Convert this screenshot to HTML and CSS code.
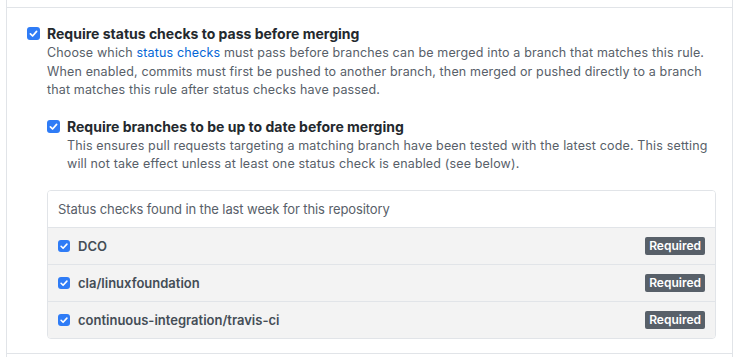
FILE: index.html
```html
<!DOCTYPE html>
<html lang="en">
<head>
<meta charset="utf-8">
<title>Status checks</title>
<link rel="stylesheet" href="styles.css">
</head>
<body>
<div class="panel">
  <div class="item">
    <div class="opt">
      <span class="cb"><svg viewBox="0 0 13 13" width="13" height="13"><path d="M3.4 6.8 L5.6 9 L9.6 4.4" fill="none" stroke="#fff" stroke-width="1.7" stroke-linecap="round" stroke-linejoin="round"/></svg></span>
      <div class="opt-body">
        <div class="opt-title">Require status checks to pass before merging</div>
        <p class="note">Choose which <a class="link" href="#">status checks</a> must pass before branches can be merged into a branch that matches this rule.<br>When enabled, commits must first be pushed to another branch, then merged or pushed directly to a branch<br>that matches this rule after status checks have passed.</p>

        <div class="opt nested">
          <span class="cb"><svg viewBox="0 0 13 13" width="13" height="13"><path d="M3.4 6.8 L5.6 9 L9.6 4.4" fill="none" stroke="#fff" stroke-width="1.7" stroke-linecap="round" stroke-linejoin="round"/></svg></span>
          <div class="opt-body">
            <div class="opt-title">Require branches to be up to date before merging</div>
            <p class="note">This ensures pull requests targeting a matching branch have been tested with the latest code. This setting<br>will not take effect unless at least one status check is enabled (see below).</p>
          </div>
        </div>

        <div class="box">
          <div class="box-header">Status checks found in the last week for this repository</div>
          <div class="box-row">
            <span class="cb cb-sm"><svg viewBox="0 0 12 12" width="12" height="12"><path d="M3.1 6.3 L5.1 8.3 L8.9 4.1" fill="none" stroke="#fff" stroke-width="1.6" stroke-linecap="round" stroke-linejoin="round"/></svg></span>
            <span class="check-name">DCO</span>
            <span class="badge">Required</span>
          </div>
          <div class="box-row">
            <span class="cb cb-sm"><svg viewBox="0 0 12 12" width="12" height="12"><path d="M3.1 6.3 L5.1 8.3 L8.9 4.1" fill="none" stroke="#fff" stroke-width="1.6" stroke-linecap="round" stroke-linejoin="round"/></svg></span>
            <span class="check-name">cla/linuxfoundation</span>
            <span class="badge">Required</span>
          </div>
          <div class="box-row">
            <span class="cb cb-sm"><svg viewBox="0 0 12 12" width="12" height="12"><path d="M3.1 6.3 L5.1 8.3 L8.9 4.1" fill="none" stroke="#fff" stroke-width="1.6" stroke-linecap="round" stroke-linejoin="round"/></svg></span>
            <span class="check-name">continuous-integration/travis-ci</span>
            <span class="badge">Required</span>
          </div>
        </div>
      </div>
    </div>
  </div>
</div>
</body>
</html>
```

FILE: styles.css
```css
* { box-sizing: border-box; }
html, body { margin: 0; padding: 0; background: #fff; }
body {
  font-family: Inter, "Liberation Sans", Arial, sans-serif;
  color: #24292e;
}
.panel {
  margin: 0 5px 0 6px;
  border-left: 1px solid #e1e4e8;
  border-right: 1px solid #e1e4e8;
  padding-top: 7px;
  height: 357px;
}
.item {
  border-top: 1px solid #e1e4e8;
  border-bottom: 1px solid #e1e4e8;
  padding: 16px 16px 14px 20px;
}
.opt {
  display: flex;
  align-items: flex-start;
  gap: 7px;
}
.opt > .cb { margin-top: 3px; }
.opt-body { flex: 1; min-width: 0; }
.opt-title {
  font-size: 14px;
  font-weight: 700;
  line-height: 20px;
  color: #24292e;
}
.note {
  margin: 0;
  font-size: 12.5px;
  line-height: 18.5px;
  letter-spacing: 0.15px;
  color: #586069;
  white-space: nowrap;
}
.link { color: #0366d6; text-decoration: none; }
.nested { margin-top: 17px; }
.cb {
  flex: none;
  width: 13px;
  height: 13px;
  border-radius: 3px;
  background: #2f7cf6;
  display: inline-flex;
}
.cb svg { display: block; }
.cb-sm { width: 12px; height: 12px; border-radius: 3px; }
.box {
  margin-top: 16px;
  border: 1px solid #e1e4e8;
  border-radius: 4px;
  overflow: hidden;
}
.box-header {
  height: 36px;
  display: flex;
  align-items: center;
  padding: 0 10px;
  font-size: 13px;
  letter-spacing: -0.1px;
  color: #586069;
  background: #fff;
}
.box-row {
  height: 37px;
  border-top: 1px solid #e1e4e8;
  background: #f3f3f3;
  display: flex;
  align-items: center;
  padding: 0 10px;
  gap: 8px;
}
.check-name {
  flex: 1;
  font-size: 13px;
  font-weight: 600;
  color: #444d56;
}
.badge {
  background: #586069;
  color: #fff;
  font-size: 12px;
  font-weight: 600;
  line-height: 18px;
  padding: 0 4px;
  border-radius: 2px;
}
```
